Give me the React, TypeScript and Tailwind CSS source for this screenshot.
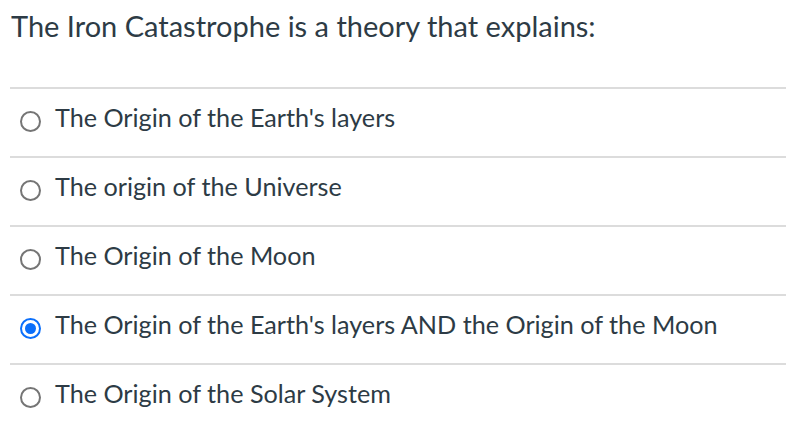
import React from "react";

const options = [
  "The Origin of the Earth's layers",
  "The origin of the Universe",
  "The Origin of the Moon",
  "The Origin of the Earth's layers AND the Origin of the Moon",
  "The Origin of the Solar System",
];

export default function App() {
  const selected = 3;
  return (
    <div className="w-[786px] h-[442px] bg-white overflow-hidden text-[#2d3b45]" style={{ fontFamily: "Lato, 'Open Sans', sans-serif" }}>
      <div className="pl-[11px] pt-[6px] h-[87px]">
        <h1 className="text-[29px] leading-[40px] font-normal m-0">
          The Iron Catastrophe is a theory that explains:
        </h1>
      </div>
      <div className="pl-[10px]">
        {options.map((o, i) => (
          <label key={i} className="flex items-start h-[69px] border-t-2 border-[#dcdcdc] gap-[14px] pl-[10px] pt-[12px]">
            {i === selected ? (
              <span className="mt-[10px] w-[21px] h-[21px] rounded-full border-[2.5px] border-[#0b6ffb] flex items-center justify-center shrink-0">
                <span className="w-[11px] h-[11px] rounded-full bg-[#0b6ffb]" />
              </span>
            ) : (
              <span className="mt-[10px] w-[21px] h-[21px] rounded-full border-2 border-[#757575] shrink-0" />
            )}
            <span className="text-[25.2px] leading-[32px]">{o}</span>
          </label>
        ))}
      </div>
    </div>
  );
}
